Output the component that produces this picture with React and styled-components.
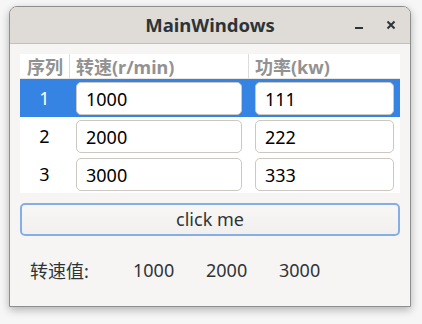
import React from "react";
import styled, { createGlobalStyle } from "styled-components";

const Global = createGlobalStyle`
  html, body { margin: 0; padding: 0; background: #f6f6f6; }
  body { font-family: "Noto Sans", "Noto Sans CJK SC", sans-serif; }
  * { box-sizing: border-box; }
`;

const Page = styled.div`
  padding: 6px 0 0 9px;
  width: 422px;
  height: 324px;
`;

const Window = styled.div`
  width: 402px;
  height: 301px;
  border: 1px solid #8e8e8e;
  border-radius: 8px 8px 0 0;
  background: #f6f5f4;
  box-shadow: 0 3px 9px rgba(0, 0, 0, 0.28);
  display: flex;
  flex-direction: column;
  overflow: hidden;
`;

const TitleBar = styled.div`
  height: 37px;
  flex: none;
  background: #dfdcd8;
  border-bottom: 1px solid #c3bfbb;
  position: relative;
  display: flex;
  align-items: center;
  justify-content: center;
`;

const Title = styled.div`
  font-weight: 700;
  font-size: 18.5px;
  color: #2e3436;
  margin-top: -2px;
`;

const Controls = styled.div`
  position: absolute;
  right: 13px;
  top: 0;
  height: 100%;
  display: flex;
  align-items: center;
  gap: 20px;
`;

const Content = styled.div`
  padding: 10px 10px 0 10px;
  display: flex;
  flex-direction: column;
`;

const Table = styled.div`
  background: #ffffff;
  display: grid;
  grid-template-columns: 49px 179px 152px;
  grid-auto-rows: 38px;
  grid-template-rows: 25px;
`;

const HeadCell = styled.div`
  font-size: 18px;
  font-weight: 700;
  color: #929292;
  display: flex;
  align-items: center;
  padding-left: ${(p) => (p.$first ? 7 : 6)}px;
  border-left: ${(p) => (p.$first ? "none" : "1px solid #dcdcdc")};
  border-bottom: 1px solid #e6e6e6;
  line-height: 1;
  padding-top: 1px;
  white-space: nowrap;
`;

const Cell = styled.div`
  background: ${(p) => (p.$sel ? "#3584e4" : "#ffffff")};
  display: flex;
  align-items: center;
  justify-content: ${(p) => (p.$num ? "center" : "flex-start")};
  padding: ${(p) => (p.$num ? "0" : "0 6px 0 7px")};
  color: ${(p) => (p.$sel ? "#ffffff" : "#000000")};
  font-size: 18px;
`;

const Input = styled.div`
  width: 100%;
  height: 33px;
  border: 1px solid #cdc7c2;
  border-radius: 5px;
  background: #ffffff;
  color: #000;
  font-size: 18px;
  display: flex;
  align-items: center;
  padding-left: 9px;
  margin-top: 1px;
`;

const Button = styled.div`
  margin-top: 10px;
  height: 33px;
  border: 2px solid #86aee6;
  border-radius: 5px;
  background: linear-gradient(#f8f7f6, #f1f0ee);
  color: #2e3436;
  font-size: 18px;
  display: flex;
  align-items: center;
  justify-content: center;
  padding-bottom: 1px;
`;

const Values = styled.div`
  margin-top: 22px;
  display: flex;
  align-items: center;
  padding-left: 10px;
  font-size: 18px;
  color: #2e3436;
  height: 24px;
`;

const Label = styled.span`
  width: 103px;
`;

const Value = styled.span`
  width: 73px;
`;

const rows = [
  ["1", "1000", "111"],
  ["2", "2000", "222"],
  ["3", "3000", "333"],
];

export default function App() {
  return (
    <>
      <Global />
      <Page>
        <Window>
          <TitleBar>
            <Title>MainWindows</Title>
            <Controls>
              <svg width="12" height="12" viewBox="0 0 12 12">
                <rect x="2" y="8" width="8" height="2" fill="#2e3436" />
              </svg>
              <svg width="12" height="12" viewBox="0 0 12 12">
                <path d="M2.5 2.5 L9.5 9.5 M9.5 2.5 L2.5 9.5" stroke="#2e3436" strokeWidth="2" />
              </svg>
            </Controls>
          </TitleBar>
          <Content>
            <Table>
              <HeadCell $first>序列</HeadCell>
              <HeadCell>转速(r/min)</HeadCell>
              <HeadCell>功率(kw)</HeadCell>
              {rows.map((r, i) => (
                <React.Fragment key={r[0]}>
                  <Cell $num $sel={i === 0}>{r[0]}</Cell>
                  <Cell $sel={i === 0}>
                    <Input>{r[1]}</Input>
                  </Cell>
                  <Cell $sel={i === 0}>
                    <Input>{r[2]}</Input>
                  </Cell>
                </React.Fragment>
              ))}
            </Table>
            <Button>click me</Button>
            <Values>
              <Label>转速值:</Label>
              <Value>1000</Value>
              <Value>2000</Value>
              <Value>3000</Value>
            </Values>
          </Content>
        </Window>
      </Page>
    </>
  );
}
